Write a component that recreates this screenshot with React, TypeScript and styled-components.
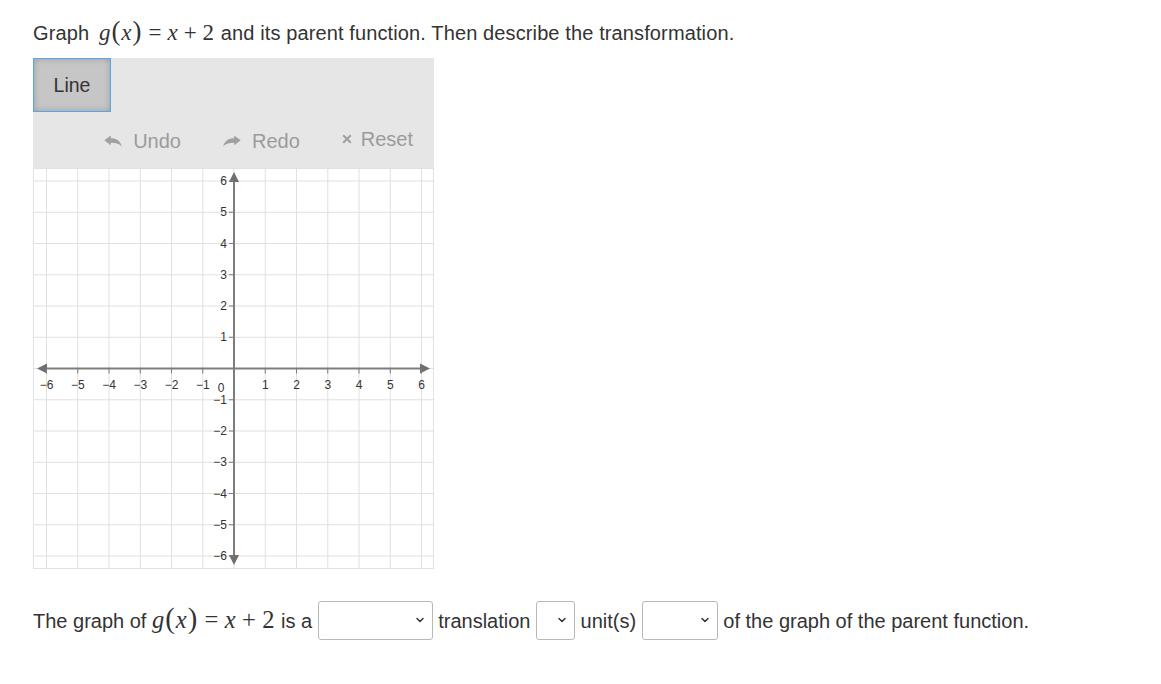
import React from "react";
import styled, { createGlobalStyle } from "styled-components";
import { ChevronDown } from "lucide-react";

const GlobalStyle = createGlobalStyle`
  html, body {
    margin: 0;
    padding: 0;
    background: #ffffff;
  }
  body {
    font-family: "Liberation Sans", Arial, sans-serif;
    color: #333333;
  }
`;

const UNIT = 31.25;
const SIZE = 401;
const ORIGIN_X = 201;
const ORIGIN_Y = 200.5;
const STEPS = [-6, -5, -4, -3, -2, -1, 0, 1, 2, 3, 4, 5, 6];

const fmt = (n: number) => (n < 0 ? "\u2212" + Math.abs(n) : String(n));

const Formula = ({ size, lead }: { size: number; lead: number }) => (
  <MathText $size={size} $lead={lead}>
    <Var>g</Var>
    <Paren>(</Paren>
    <Var>x</Var>
    <Paren>)</Paren>
    <Op>=</Op>
    <Var>x</Var>
    <Op>+</Op>2
  </MathText>
);

// curved arrow, mirrored for redo
const ReplyIcon = ({ flip }: { flip?: boolean }) => (
  <svg width="18" height="12" viewBox="0 0 18 12" style={flip ? { transform: "scaleX(-1)" } : undefined}>
    <path
      d="M0.3 5.2 L6.8 0.4 V3.3 C12.2 3.3 16.8 5.8 17.8 11.8 C15.6 8.8 12.4 7.8 6.8 7.8 V10.3 Z"
      fill="currentColor"
    />
  </svg>
);

const CloseIcon = () => (
  <svg width="10" height="10" viewBox="0 0 10 10">
    <path d="M1.2 1.2 L8.8 8.8 M8.8 1.2 L1.2 8.8" stroke="currentColor" strokeWidth="2" />
  </svg>
);

const Graph = () => {
  const px = (v: number) => ORIGIN_X + v * UNIT;
  const py = (v: number) => ORIGIN_Y - v * UNIT;
  return (
    <svg width={SIZE} height={SIZE} viewBox={`0 0 ${SIZE} ${SIZE}`}>
      <rect x={0.5} y={0.5} width={SIZE - 1} height={SIZE - 1} fill="#fff" stroke="#e2e2e2" />
      {STEPS.map((s) => (
        <g key={"g" + s}>
          <line x1={px(s)} x2={px(s)} y1={0} y2={SIZE} stroke="#e0e0e0" strokeWidth={1} />
          <line x1={0} x2={SIZE} y1={py(s)} y2={py(s)} stroke="#e0e0e0" strokeWidth={1} />
        </g>
      ))}
      {/* axes */}
      <line x1={10} x2={SIZE - 10} y1={ORIGIN_Y} y2={ORIGIN_Y} stroke="#7d7d7d" strokeWidth={2} />
      <line x1={ORIGIN_X} x2={ORIGIN_X} y1={10} y2={SIZE - 10} stroke="#7d7d7d" strokeWidth={2} />
      <polygon points={`4,${ORIGIN_Y} 14,${ORIGIN_Y - 5} 14,${ORIGIN_Y + 5}`} fill="#6f6f6f" />
      <polygon
        points={`${SIZE - 4},${ORIGIN_Y} ${SIZE - 14},${ORIGIN_Y - 5} ${SIZE - 14},${ORIGIN_Y + 5}`}
        fill="#6f6f6f"
      />
      <polygon points={`${ORIGIN_X},4 ${ORIGIN_X - 5},14 ${ORIGIN_X + 5},14`} fill="#6f6f6f" />
      <polygon
        points={`${ORIGIN_X},${SIZE - 4} ${ORIGIN_X - 5},${SIZE - 14} ${ORIGIN_X + 5},${SIZE - 14}`}
        fill="#6f6f6f"
      />
      {/* ticks and labels */}
      {STEPS.filter((s) => s !== 0).map((s) => (
        <g key={"t" + s} fontFamily="Liberation Sans, Arial, sans-serif" fontSize={12} fill="#333">
          <line x1={px(s)} x2={px(s)} y1={ORIGIN_Y} y2={ORIGIN_Y + 5} stroke="#7d7d7d" />
          <line x1={ORIGIN_X - 5} x2={ORIGIN_X} y1={py(s)} y2={py(s)} stroke="#7d7d7d" />
          <text x={px(s)} y={ORIGIN_Y + 20} textAnchor="middle">
            {fmt(s)}
          </text>
          <text x={ORIGIN_X - 7} y={py(s) + 4} textAnchor="end">
            {fmt(s)}
          </text>
        </g>
      ))}
      <text
        x={ORIGIN_X - 13}
        y={ORIGIN_Y + 23}
        textAnchor="middle"
        fontFamily="Liberation Sans, Arial, sans-serif"
        fontSize={12}
        fill="#333"
      >
        0
      </text>
    </svg>
  );
};

const Dropdown = ({ width }: { width: number }) => (
  <SelectWrap $width={width}>
    <Select defaultValue="">
      <option value=""></option>
    </Select>
    <Chevron>
      <ChevronDown size={12} strokeWidth={3} />
    </Chevron>
  </SelectWrap>
);

const App = () => {
  return (
    <Page>
      <GlobalStyle />
      <Title>
        Graph <Formula size={23} lead={4} /> and its parent function. Then describe the transformation.
      </Title>
      <Panel>
        <ToolRow>
          <ToolButton $active>Line</ToolButton>
        </ToolRow>
        <ActionRow>
          <Action>
            <ReplyIcon />
            Undo
          </Action>
          <Action>
            <ReplyIcon flip />
            Redo
          </Action>
          <Action $raised>
            <CloseIcon />
            Reset
          </Action>
        </ActionRow>
        <Graph />
      </Panel>
      <Sentence>
        The graph of <Formula size={24.5} lead={0} /> is a <Dropdown width={115} /> translation{" "}
        <Dropdown width={39} /> unit(s) <Dropdown width={76} /> of the graph of the parent function.
      </Sentence>
    </Page>
  );
};

const Page = styled.div`
  padding: 19px 0 0 33px;
  font-size: 20px;
`;

const Title = styled.div`
  line-height: 24px;
  height: 24px;
  white-space: nowrap;
  letter-spacing: 0.12px;
`;

const MathText = styled.span<{ $size: number; $lead: number }>`
  font-family: "Liberation Serif", "Times New Roman", serif;
  font-size: ${(p) => p.$size}px;
  letter-spacing: 0;
  margin-left: ${(p) => p.$lead}px;
  margin-right: 1px;
`;

const Var = styled.span`
  font-style: italic;
`;

const Paren = styled.span`
  font-size: 1.17em;
  margin: 0 1px;
`;

const Op = styled.span`
  margin: 0 0.26em;
`;

const Panel = styled.div`
  margin-top: 15px;
  width: 401px;
  background: #e6e6e6;
  display: flex;
  flex-direction: column;
`;

const ToolRow = styled.div`
  display: flex;
  height: 54px;
`;

const ToolButton = styled.div<{ $active?: boolean }>`
  width: 78px;
  height: 54px;
  box-sizing: border-box;
  display: flex;
  align-items: center;
  justify-content: center;
  font-size: 19.5px;
  color: #333;
  background: ${(p) => (p.$active ? "#c6c6c6" : "transparent")};
  border: 1px solid ${(p) => (p.$active ? "#56a7ef" : "transparent")};
  box-shadow: inset 0 0 6px rgba(0, 0, 0, 0.22);
`;

const ActionRow = styled.div`
  display: flex;
  justify-content: flex-end;
  align-items: center;
  height: 56px;
`;

const Action = styled.div<{ $raised?: boolean }>`
  display: flex;
  align-items: center;
  gap: ${(p) => (p.$raised ? "9px" : "11px")};
  padding: 0 21px;
  font-size: 20px;
  color: #9b9b9b;
  position: relative;
  top: ${(p) => (p.$raised ? "-1px" : "1px")};

  svg {
    color: #a0a0a0;
  }
`;

const Sentence = styled.div`
  margin-top: 30px;
  line-height: 39px;
  white-space: nowrap;
`;

const SelectWrap = styled.span<{ $width: number }>`
  position: relative;
  display: inline-block;
  vertical-align: middle;
  width: ${(p) => p.$width}px;
  height: 39px;
  margin: -6px 0 0;
`;

const Select = styled.select`
  appearance: none;
  width: 100%;
  height: 100%;
  box-sizing: border-box;
  border: 1px solid #b8b8b8;
  border-radius: 3px;
  background: #fff;
  font-size: 16px;
`;

const Chevron = styled.span`
  position: absolute;
  right: 7px;
  top: 14px;
  color: #333;
  pointer-events: none;
  display: flex;
`;

export default App;
